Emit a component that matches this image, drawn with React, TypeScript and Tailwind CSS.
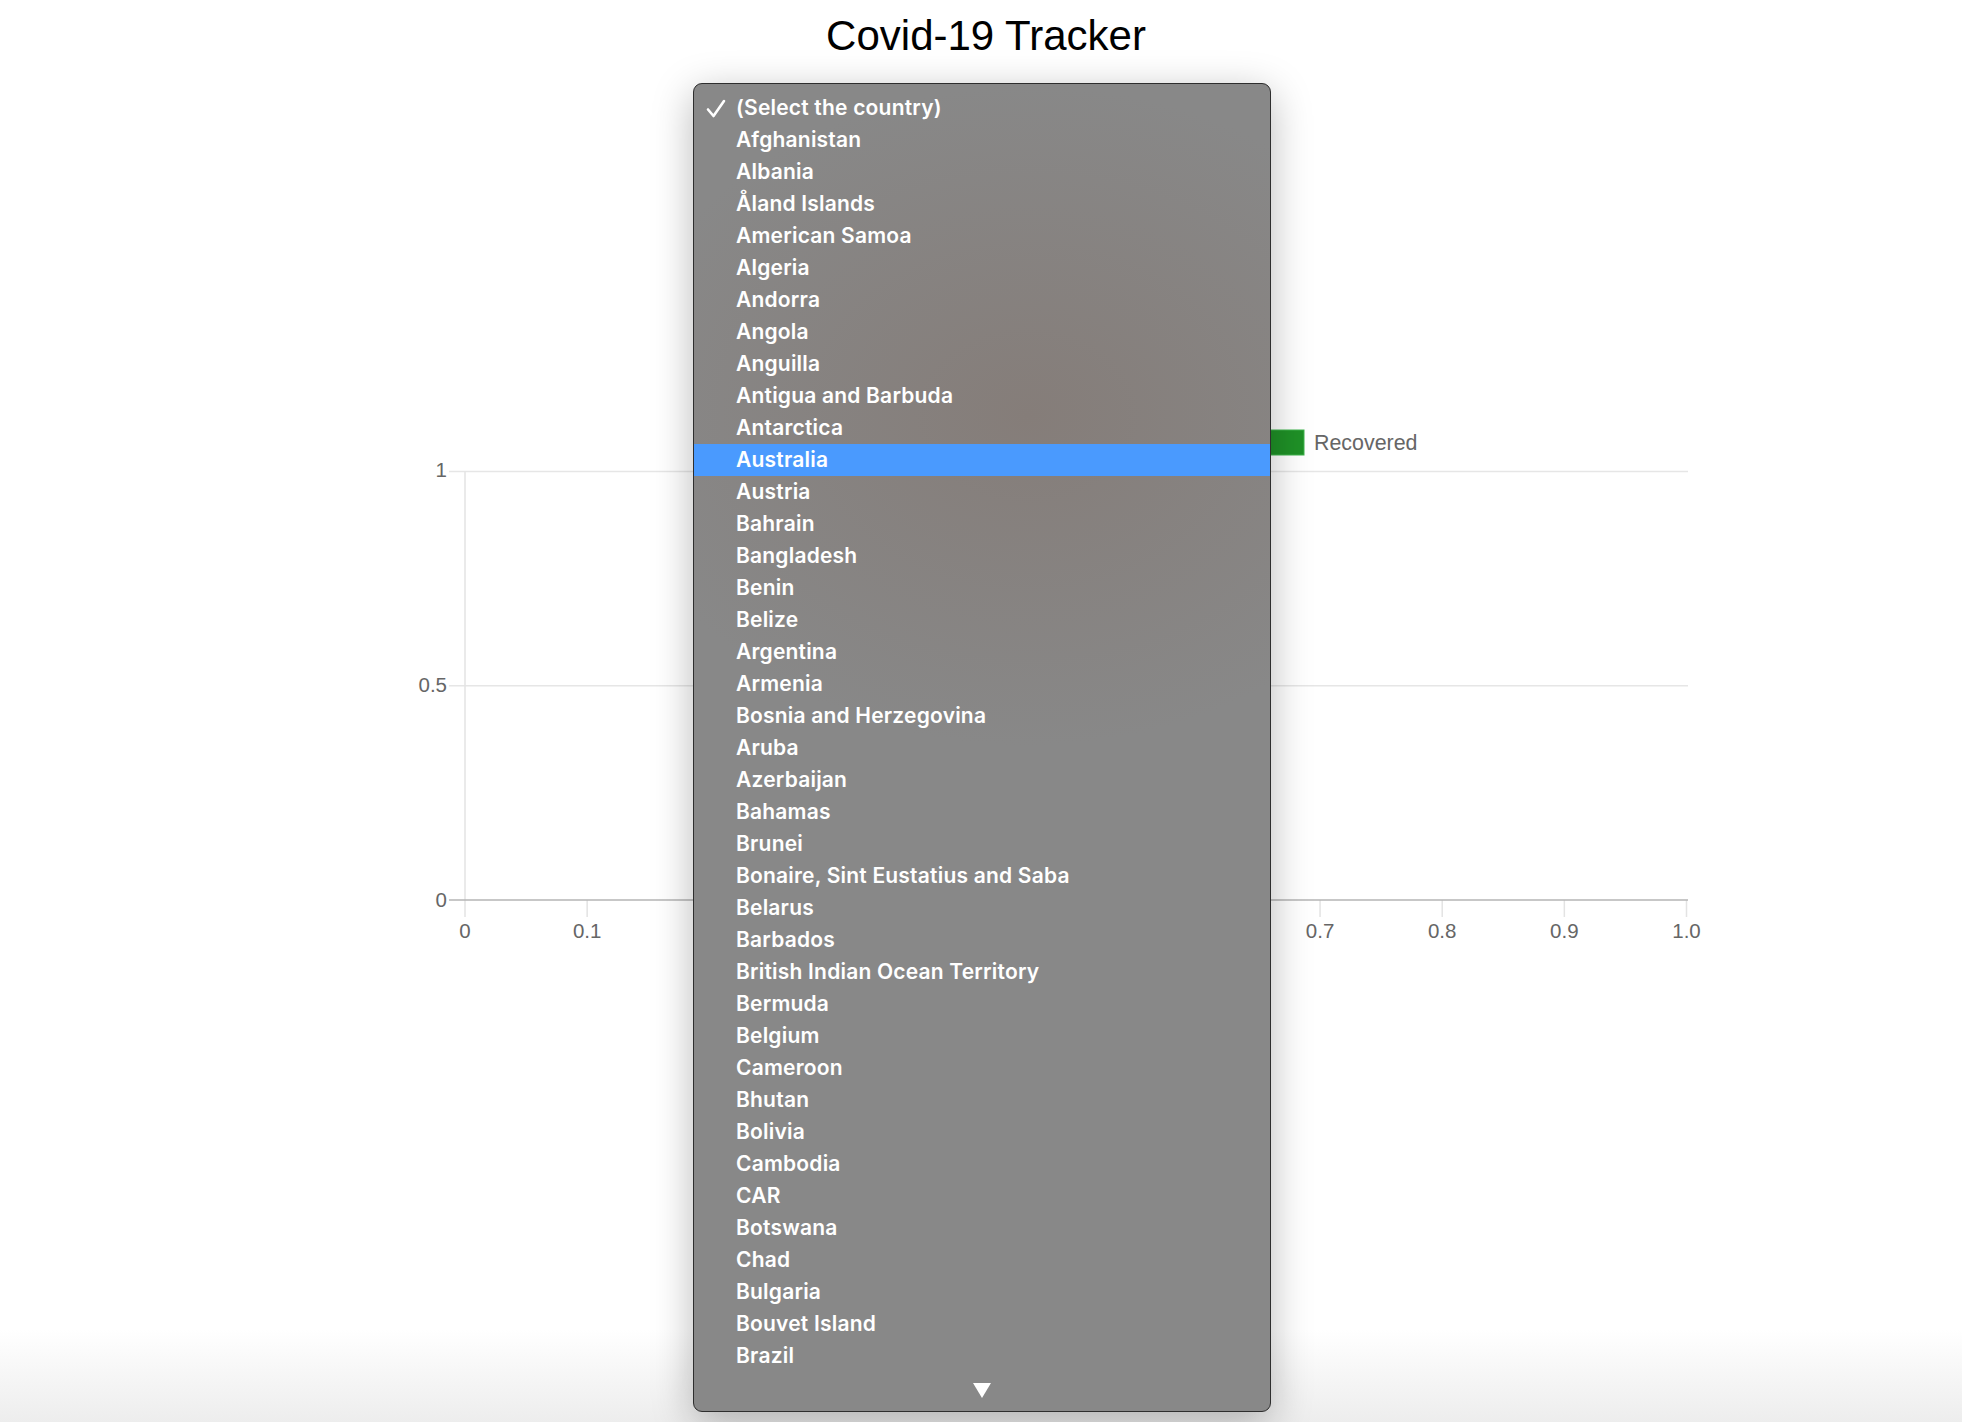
import React from "react"

const countries = [
  "(Select the country)",
  "Afghanistan",
  "Albania",
  "Åland Islands",
  "American Samoa",
  "Algeria",
  "Andorra",
  "Angola",
  "Anguilla",
  "Antigua and Barbuda",
  "Antarctica",
  "Australia",
  "Austria",
  "Bahrain",
  "Bangladesh",
  "Benin",
  "Belize",
  "Argentina",
  "Armenia",
  "Bosnia and Herzegovina",
  "Aruba",
  "Azerbaijan",
  "Bahamas",
  "Brunei",
  "Bonaire, Sint Eustatius and Saba",
  "Belarus",
  "Barbados",
  "British Indian Ocean Territory",
  "Bermuda",
  "Belgium",
  "Cameroon",
  "Bhutan",
  "Bolivia",
  "Cambodia",
  "CAR",
  "Botswana",
  "Chad",
  "Bulgaria",
  "Bouvet Island",
  "Brazil",
]

const X0 = 465
const X1 = 1686.5
// labels 0.2 - 0.6 sit under the open menu, so only the ones left and right of it are drawn
const xTicks = ["0", "0.1", "0.2", "0.3", "0.4", "0.5", "0.6", "0.7", "0.8", "0.9", "1.0"]
const hiddenUnderMenu = (x: number) => x > 680 && x < 1285

function Chart() {
  const step = (X1 - X0) / 10
  return (
    <svg width="1962" height="900" viewBox="0 60 1962 900" className="block" style={{ fontFamily: '"Liberation Sans", Arial, sans-serif' }}>
      {/* legend */}
      <rect x="1264" y="430" width="40" height="25" fill="#1f9127" stroke="#3fb44c" strokeWidth="1" />
      <text x="1314" y="450" fontSize="21.4" fill="#666">Recovered</text>

      {/* grid */}
      <line x1="449" y1="471.5" x2="1688" y2="471.5" stroke="#e6e6e6" strokeWidth="1.5" />
      <line x1="449" y1="685.7" x2="1688" y2="685.7" stroke="#e6e6e6" strokeWidth="1.5" />
      <line x1={X0} y1="471.5" x2={X0} y2="917" stroke="#e3e3e3" strokeWidth="1.5" />
      {xTicks.slice(1).map((_, i) => {
        const x = X0 + step * (i + 1)
        return <line key={i} x1={x} y1="900" x2={x} y2="917" stroke="#e3e3e3" strokeWidth="1.5" />
      })}
      <line x1="449" y1="900" x2="1688" y2="900" stroke="#b5b5b5" strokeWidth="1.5" />

      {/* y labels */}
      <text x="447" y="477" fontSize="20.5" fill="#666" textAnchor="end">1</text>
      <text x="447" y="692" fontSize="20.5" fill="#666" textAnchor="end">0.5</text>
      <text x="447" y="907" fontSize="20.5" fill="#666" textAnchor="end">0</text>

      {/* x labels */}
      {xTicks.map((t, i) => {
        const x = X0 + step * i
        if (hiddenUnderMenu(x)) return null
        return (
          <text key={t} x={x} y="938" fontSize="20.5" fill="#666" textAnchor="middle">
            {t}
          </text>
        )
      })}
    </svg>
  )
}

function CountryMenu() {
  return (
    <div className="absolute left-[693px] top-[83px] w-[578px] h-[1329px] rounded-[9px] border border-[#2e2e2e] bg-[#888888] bg-[radial-gradient(ellipse_420px_330px_at_58%_25%,#857d79_0%,#888888_100%)] shadow-[0_10px_40px_rgba(0,0,0,0.28)] overflow-hidden">
      <div className="pt-[8px]" style={{ fontFamily: "Inter, 'Noto Sans', sans-serif" }}>
        {countries.map((name, i) => {
          const active = name === "Australia"
          return (
            <div
              key={name}
              className={`relative flex items-center h-[32px] pl-[42px] text-[21px] font-semibold tracking-[0.2px] text-white ${active ? "bg-[#4a9afe]" : ""}`}
            >
              {i === 0 && (
                <svg className="absolute left-[12px] top-[7px]" width="20" height="19" viewBox="0 0 20 19">
                  <path d="M2 10.5 L7.5 17 L18 2" fill="none" stroke="white" strokeWidth="2.6" strokeLinecap="round" strokeLinejoin="round" />
                </svg>
              )}
              <span className="whitespace-nowrap">{name}</span>
            </div>
          )
        })}
      </div>
      <div className="flex justify-center pt-[11px]">
        <svg width="18" height="15" viewBox="0 0 18 15">
          <path d="M0 0 H18 L9 15 Z" fill="white" />
        </svg>
      </div>
    </div>
  )
}

export default function App() {
  return (
    <div
      className="relative w-full h-[1422px] overflow-hidden bg-[linear-gradient(to_bottom,#ffffff_1330px,#ededed_1422px)]"
      style={{ fontFamily: '"Liberation Sans", Arial, sans-serif' }}
    >
      <h1 className="pt-[12px] pl-[10px] h-[60px] text-center text-[42px] leading-[48px] font-normal text-black">Covid-19 Tracker</h1>
      <Chart />
      <CountryMenu />
    </div>
  )
}
